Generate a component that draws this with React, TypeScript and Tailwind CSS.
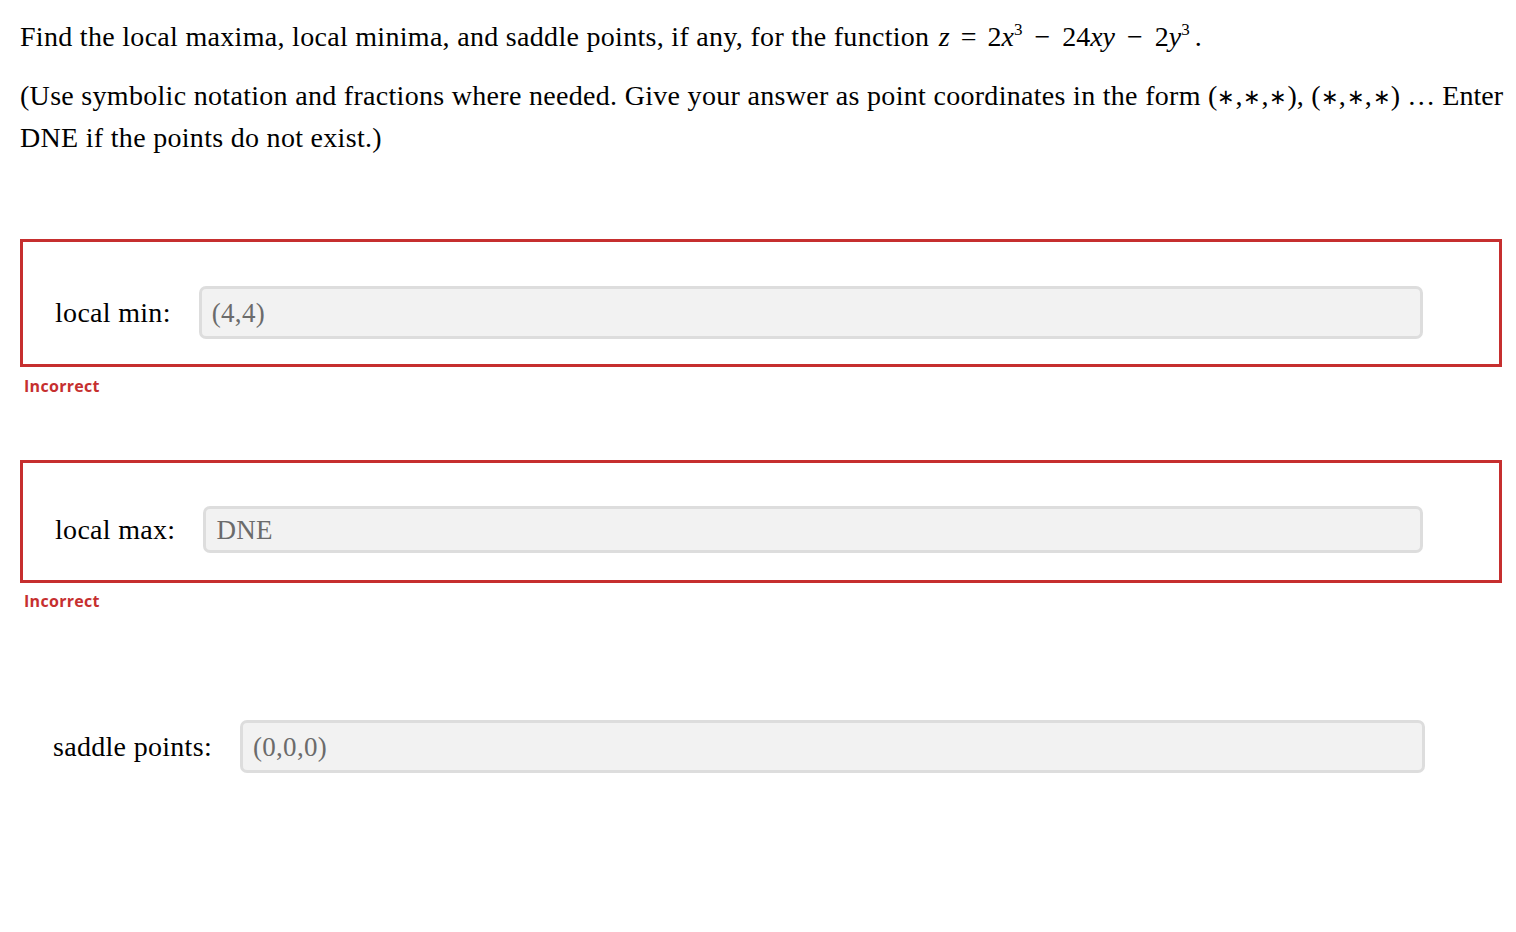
import React from "react";

const serif = { fontFamily: '"Liberation Serif", "Times New Roman", serif' };
const sans = { fontFamily: '"Open Sans", "Noto Sans", sans-serif' };

function Star() {
  return <span className="text-[21px] leading-none relative -top-[1px]">∗</span>;
}

function Ast() {
  return (
    <span className="tracking-normal">
      (<Star />,<span className="ml-[1px]" />
      <Star />,<span className="ml-[1px]" />
      <Star />)
    </span>
  );
}

function Input({ value, h }: { value: string; h: string }) {
  return (
    <div
      className={`flex-1 ${h} border-[3px] border-[#dddddd] bg-[#f2f2f2] rounded-[7px] flex items-center pl-[10px] text-[27px] text-[#6b6b6b]`}
    >
      {value}
    </div>
  );
}

function Incorrect({ mt }: { mt: string }) {
  return (
    <div
      className={`${mt} ml-[4px] text-[16px] leading-[22px] font-bold text-[#c62f2f]`}
      style={sans}
    >
      Incorrect
    </div>
  );
}

export default function App() {
  return (
    <div
      className="w-[1516px] h-[932px] bg-white pl-[20px] pr-[14px] pt-[16px] text-black text-[28px] leading-[42px] tracking-[0.3px]"
      style={serif}
    >
      <p className="whitespace-nowrap">
        Find the local maxima, local minima, and saddle points, if any, for the function{" "}
        <span className="tracking-normal">
          <i className="ml-[2px]">z</i>
          <span className="mx-[11px]">=</span>2<i>x</i>
          <span className="text-[17px] leading-none relative -top-[11px]">3</span>
          <span className="mx-[12px]">−</span>24<i>xy</i>
          <span className="mx-[12px]">−</span>2<i>y</i>
          <span className="text-[17px] leading-none relative -top-[11px]">3</span>
          <span className="ml-[5px]">.</span>
        </span>
      </p>
      <p className="mt-[17px]">
        <span className="whitespace-nowrap">
          (Use symbolic notation and fractions where needed. Give your answer as point coordinates in the form{" "}
          <Ast />, <Ast /> <span className="tracking-normal">… Enter</span>
        </span>
        <br />
        DNE if the points do not exist.)
      </p>

      <div className="mt-[80px] border-[3px] border-[#c62f2f] pl-[32px] pr-[76px] pt-[44px] pb-[25px] flex items-center">
        <span className="mr-[28px]">local min:</span>
        <Input value="(4,4)" h="h-[53px]" />
      </div>
      <Incorrect mt="mt-[8px]" />

      <div className="mt-[63px] border-[3px] border-[#c62f2f] pl-[32px] pr-[76px] pt-[43px] pb-[27px] flex items-center">
        <span className="mr-[28px]">local max:</span>
        <Input value="DNE" h="h-[47px]" />
      </div>
      <Incorrect mt="mt-[7px]" />

      <div className="mt-[108px] pl-[33px] pr-[77px] flex items-center">
        <span className="mr-[28px]">saddle points:</span>
        <Input value="(0,0,0)" h="h-[53px]" />
      </div>
    </div>
  );
}
